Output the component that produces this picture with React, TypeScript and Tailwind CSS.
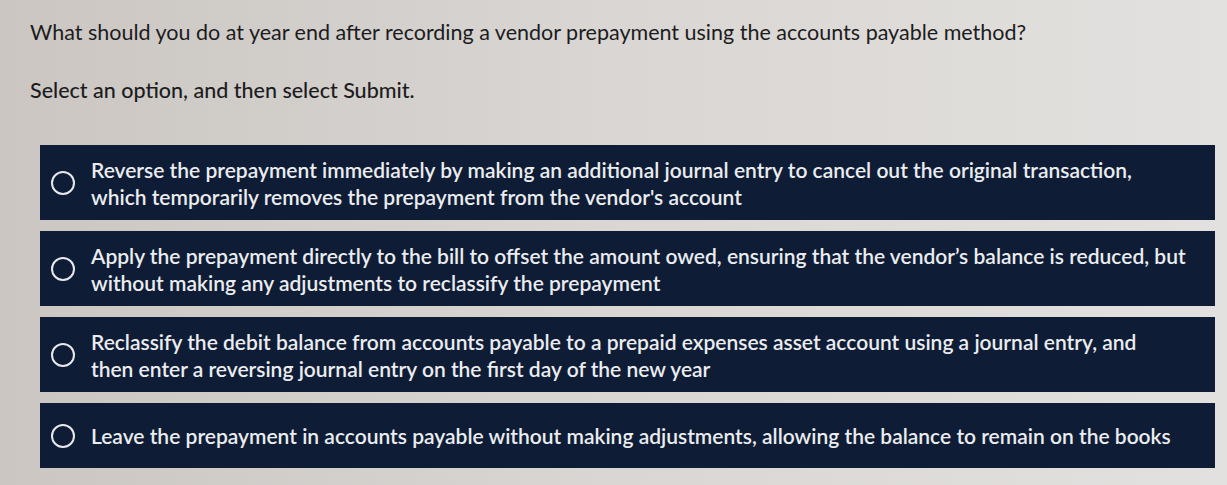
import React, { useState } from 'react';

const options: string[][] = [
  [
    'Reverse the prepayment immediately by making an additional journal entry to cancel out the original transaction,',
    "which temporarily removes the prepayment from the vendor's account",
  ],
  [
    'Apply the prepayment directly to the bill to offset the amount owed, ensuring that the vendor’s balance is reduced, but',
    'without making any adjustments to reclassify the prepayment',
  ],
  [
    'Reclassify the debit balance from accounts payable to a prepaid expenses asset account using a journal entry, and',
    'then enter a reversing journal entry on the first day of the new year',
  ],
  ['Leave the prepayment in accounts payable without making adjustments, allowing the balance to remain on the books'],
];

const App: React.FC = () => {
  const [selected, setSelected] = useState<number | null>(null);

  return (
    <div
      className="w-[1227px] h-[485px] overflow-hidden bg-gradient-to-r from-[#cbc6c2] via-[#d9d6d3] to-[#e3e1df] text-[#1c1c1e]"
      style={{ fontFamily: 'Lato, "Open Sans", sans-serif' }}
    >
      <div className="pl-[30px] pt-[18px]">
        <p className="text-[21.5px] leading-[28px]">
          What should you do at year end after recording a vendor prepayment using the accounts payable method?
        </p>
        <p className="mt-[30px] text-[21.5px] leading-[28px] font-medium">Select an option, and then select Submit.</p>
      </div>

      <div className="mt-[41px] ml-[40px] mr-[12px] flex flex-col gap-[11px]">
        {options.map((lines, i) => (
          <button
            key={i}
            onClick={() => setSelected(i)}
            className={`flex items-center gap-[16px] bg-[#0e1d35] text-left pl-[11px] pr-[10px] ${
              i === 3 ? 'h-[65px]' : 'h-[75px]'
            }`}
          >
            <span className="shrink-0 w-[24px] h-[24px] rounded-full border-2 border-[#e6e8ec] flex items-center justify-center">
              {selected === i && <span className="w-[11px] h-[11px] rounded-full bg-[#e6e8ec]" />}
            </span>
            <span className="text-[21px] leading-[27px] font-semibold text-[#ebecef] whitespace-nowrap">
              {lines.map((l, j) => (
                <span key={j} className="block">
                  {l}
                </span>
              ))}
            </span>
          </button>
        ))}
      </div>
    </div>
  );
};

export default App;
